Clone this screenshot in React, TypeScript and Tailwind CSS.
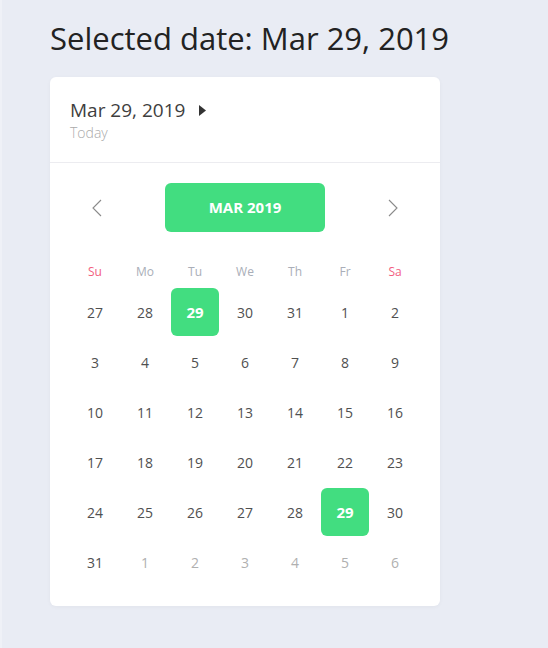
import React from "react";

const weekdays = ["Su", "Mo", "Tu", "We", "Th", "Fr", "Sa"];

type Day = { n: number; muted?: boolean; selected?: boolean };

const weeks: Day[][] = [
  [{ n: 27 }, { n: 28 }, { n: 29, selected: true }, { n: 30 }, { n: 31 }, { n: 1 }, { n: 2 }],
  [{ n: 3 }, { n: 4 }, { n: 5 }, { n: 6 }, { n: 7 }, { n: 8 }, { n: 9 }],
  [{ n: 10 }, { n: 11 }, { n: 12 }, { n: 13 }, { n: 14 }, { n: 15 }, { n: 16 }],
  [{ n: 17 }, { n: 18 }, { n: 19 }, { n: 20 }, { n: 21 }, { n: 22 }, { n: 23 }],
  [{ n: 24 }, { n: 25 }, { n: 26 }, { n: 27 }, { n: 28 }, { n: 29, selected: true }, { n: 30 }],
  [
    { n: 31 },
    { n: 1, muted: true },
    { n: 2, muted: true },
    { n: 3, muted: true },
    { n: 4, muted: true },
    { n: 5, muted: true },
    { n: 6, muted: true },
  ],
];

function Chevron({ dir }: { dir: "left" | "right" }) {
  return (
    <svg width="16" height="18" viewBox="0 0 16 18" className="text-[#8a8a8a]">
      {dir === "left" ? (
        <polyline points="12,1 4,9 12,17" fill="none" stroke="currentColor" strokeWidth="1.1" />
      ) : (
        <polyline points="4,1 12,9 4,17" fill="none" stroke="currentColor" strokeWidth="1.1" />
      )}
    </svg>
  );
}

export default function App() {
  return (
    <div
      className="min-h-screen bg-[#e9ecf4] border-l-2 border-[#eff1f7] pl-[48px] pt-[18px]"
      style={{ fontFamily: '"Open Sans", "Noto Sans", sans-serif' }}
    >
      <h1 className="text-[31px] leading-[40px] text-[#222]">Selected date: Mar 29, 2019</h1>

      <div className="mt-[19px] w-[390px] bg-white rounded-md shadow-[0_1px_4px_rgba(0,0,0,0.04)]">
        {/* header */}
        <div className="px-5 pt-[20px] pb-[19px] border-b border-[#ececf0]">
          <div className="flex items-center gap-[14px] text-[19px] leading-[26px] text-[#3e3e3e]">
            <span>Mar 29, 2019</span>
            <svg width="7" height="11" viewBox="0 0 7 11">
              <polygon points="0,0 7,5.5 0,11" fill="#333" />
            </svg>
          </div>
          <div className="text-[14px] leading-[20px] font-light text-[#aaa]">Today</div>
        </div>

        {/* body */}
        <div className="px-5 pt-5 pb-[19px]">
          <div className="flex items-center justify-between px-[19px]">
            <Chevron dir="left" />
            <button className="w-[160px] h-[49px] rounded-md bg-[#42dd80] text-white text-[15px] font-bold">
              MAR 2019
            </button>
            <Chevron dir="right" />
          </div>

          <div className="grid grid-cols-7 mt-[30px] h-[20px] items-center text-[12px]">
            {weekdays.map((w, i) => (
              <div
                key={w}
                className={`text-center ${i === 0 || i === 6 ? "text-[#f2607f]" : "text-[#a9aeb8]"}`}
              >
                {w}
              </div>
            ))}
          </div>

          <div className="mt-[5px]">
            {weeks.map((week, wi) => (
              <div key={wi} className="grid grid-cols-7 h-[50px]">
                {week.map((d, di) => (
                  <div key={di} className="flex items-center justify-center">
                    {d.selected ? (
                      <div className="w-[48px] h-[48px] rounded-md bg-[#42dd80] text-white font-bold text-[15px] flex items-center justify-center">
                        {d.n}
                      </div>
                    ) : (
                      <span className={`text-[14px] ${d.muted ? "text-[#b0b0b0]" : "text-[#505050]"}`}>
                        {d.n}
                      </span>
                    )}
                  </div>
                ))}
              </div>
            ))}
          </div>
        </div>
      </div>
    </div>
  );
}
